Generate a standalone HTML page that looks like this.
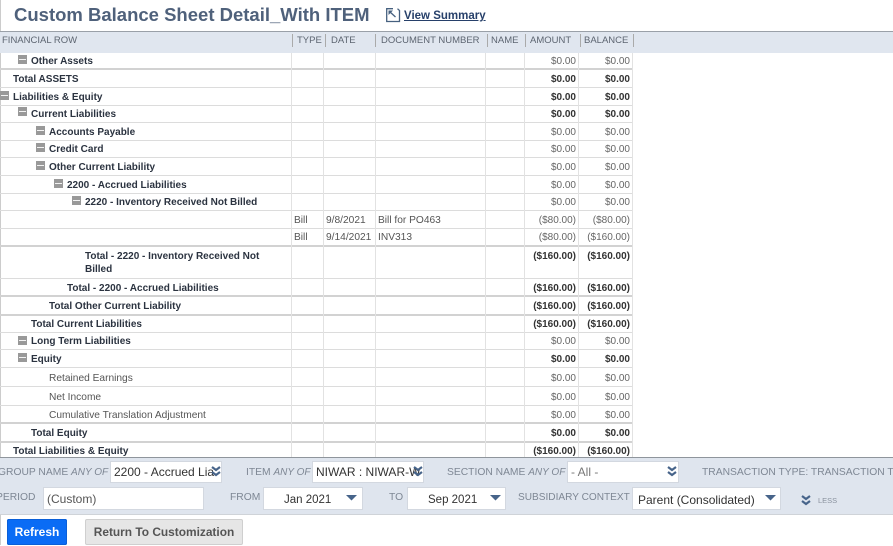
<!DOCTYPE html>
<html><head><meta charset="utf-8"><style>
html,body{margin:0;padding:0;background:#fff}
body{position:relative;width:893px;height:545px;overflow:hidden;font-family:"Liberation Sans",sans-serif;font-size:10px;color:#444}
div,span{position:absolute;white-space:nowrap}
.ln{left:0;width:632px;height:1px;background:#dcdcdc}
.tk{height:2px;background:#d2d2d2}
.v{top:53px;width:1px;height:404px;background:#e2e2e2}
.l,.a,.b,.t{height:16px;line-height:16px;margin-top:1px}
.l{font-weight:bold;color:#2b3340;font-size:10px}
.a{right:317px;text-align:right}.b{right:263px;text-align:right}
.a,.b{color:#666;font-size:10px}
.B{font-weight:bold;color:#333}
.t{color:#555;font-size:10.2px}
.m{width:9px;height:9px;background:#999}
.m:after{content:"";position:absolute;left:1px;top:4px;width:7px;height:1px;background:#f2f2f2}
.h{top:35px;height:12px;line-height:12px;font-size:9.5px;color:#5d6571}
.s{top:34px;width:1px;height:13px;background:#aaa}
.f{line-height:14px;height:14px;font-size:10.3px;color:#7e8794}
.f i{font-size:10px}
.in{background:#fff;border:1px solid #d3d8e0;box-sizing:border-box;font-size:12px;color:#333;line-height:20px;overflow:hidden}
</style></head><body>
<div style="left:0;top:0;width:1px;height:545px;background:#ccc"></div>
<div style="left:14px;top:3px;height:24px;line-height:24px;font-size:18.5px;font-weight:bold;color:#4f617b">Custom Balance Sheet Detail_With ITEM</div>
<svg style="position:absolute;left:385px;top:7px" width="16" height="16" viewBox="0 0 16 16" fill="none" stroke="#46607f" stroke-width="1.3"><path d="M8 1.700H1.700V14.500H14.500V3.500L12.500 1.700"/><path d="M10.500 10L4.500 4.500"/><path d="M3.500 3.500H8L3.500 8Z" fill="#46607f" stroke="none"/></svg>
<div style="left:404px;top:9px;height:14px;line-height:14px;font-size:11.5px;font-weight:bold;color:#27406a;text-decoration:underline">View Summary</div>

<div style="left:0;top:31px;width:893px;height:1px;background:#9aa0a8"></div>
<div style="left:0;top:32px;width:893px;height:21px;background:#e0e6ef"></div>
<div class="h" style="left:2px">FINANCIAL ROW</div>
<div class="s" style="left:292px"></div><div class="h" style="left:297px">TYPE</div>
<div class="s" style="left:325px"></div><div class="h" style="left:331px">DATE</div>
<div class="s" style="left:375px"></div><div class="h" style="left:381px">DOCUMENT NUMBER</div>
<div class="s" style="left:487px"></div><div class="h" style="left:491px">NAME</div>
<div class="s" style="left:525px"></div><div class="h" style="left:530px">AMOUNT</div>
<div class="s" style="left:580px"></div><div class="h" style="left:584px">BALANCE</div>
<div class="s" style="left:633px"></div>

<div class="ln tk" style="top:68px"></div><div class="ln" style="top:87px"></div><div class="ln" style="top:105px"></div><div class="ln" style="top:122px"></div><div class="ln" style="top:140px"></div><div class="ln" style="top:157px"></div><div class="ln" style="top:175px"></div><div class="ln" style="top:193px"></div><div class="ln" style="top:210px"></div><div class="ln" style="top:228px"></div><div class="ln tk" style="top:245px"></div><div class="ln" style="top:278px"></div><div class="ln tk" style="top:295px"></div><div class="ln tk" style="top:314px"></div><div class="ln" style="top:332px"></div><div class="ln" style="top:349px"></div><div class="ln" style="top:367px"></div><div class="ln" style="top:386px"></div><div class="ln" style="top:405px"></div><div class="ln tk" style="top:422px"></div><div class="ln tk" style="top:441px"></div>
<div class="v" style="left:291px"></div><div class="v" style="left:323px"></div><div class="v" style="left:375px"></div><div class="v" style="left:485px"></div><div class="v" style="left:524px"></div><div class="v" style="left:578px"></div><div class="v" style="left:632px"></div>

<div class="m" style="left:18px;top:55px"></div><div class="l" style="left:31px;top:53px">Other Assets</div><div class="a" style="top:53px">$0.00</div><div class="b" style="top:53px">$0.00</div>
<div class="l" style="left:13px;top:71px">Total ASSETS</div><div class="a B" style="top:71px">$0.00</div><div class="b B" style="top:71px">$0.00</div>
<div class="m" style="left:0;top:91px"></div><div class="l" style="left:13px;top:89px">Liabilities &amp; Equity</div><div class="a B" style="top:89px">$0.00</div><div class="b B" style="top:89px">$0.00</div>
<div class="m" style="left:18px;top:107px"></div><div class="l" style="left:31px;top:106px">Current Liabilities</div><div class="a B" style="top:106px">$0.00</div><div class="b B" style="top:106px">$0.00</div>
<div class="m" style="left:36px;top:126px"></div><div class="l" style="left:49px;top:124px">Accounts Payable</div><div class="a" style="top:124px">$0.00</div><div class="b" style="top:124px">$0.00</div>
<div class="m" style="left:36px;top:143px"></div><div class="l" style="left:49px;top:141px">Credit Card</div><div class="a" style="top:141px">$0.00</div><div class="b" style="top:141px">$0.00</div>
<div class="m" style="left:36px;top:161px"></div><div class="l" style="left:49px;top:159px">Other Current Liability</div><div class="a" style="top:159px">$0.00</div><div class="b" style="top:159px">$0.00</div>
<div class="m" style="left:54px;top:179px"></div><div class="l" style="left:67px;top:177px">2200 - Accrued Liabilities</div><div class="a" style="top:177px">$0.00</div><div class="b" style="top:177px">$0.00</div>
<div class="m" style="left:72px;top:196px"></div><div class="l" style="left:85px;top:194px">2220 - Inventory Received Not Billed</div><div class="a" style="top:194px">$0.00</div><div class="b" style="top:194px">$0.00</div>

<div class="t" style="left:294px;top:212px">Bill</div><div class="t" style="left:326px;top:212px">9/8/2021</div><div class="t" style="left:378px;top:212px">Bill for PO463</div><div class="a" style="top:212px">($80.00)</div><div class="b" style="top:212px">($80.00)</div>
<div class="t" style="left:294px;top:229px">Bill</div><div class="t" style="left:326px;top:229px">9/14/2021</div><div class="t" style="left:378px;top:229px">INV313</div><div class="a" style="top:229px">($80.00)</div><div class="b" style="top:229px">($160.00)</div>

<div class="l" style="left:85px;top:248px">Total - 2220 - Inventory Received Not</div><div class="l" style="left:85px;top:261px">Billed</div><div class="a B" style="top:248px">($160.00)</div><div class="b B" style="top:248px">($160.00)</div>
<div class="l" style="left:67px;top:280px">Total - 2200 - Accrued Liabilities</div><div class="a B" style="top:280px">($160.00)</div><div class="b B" style="top:280px">($160.00)</div>
<div class="l" style="left:49px;top:298px">Total Other Current Liability</div><div class="a B" style="top:298px">($160.00)</div><div class="b B" style="top:298px">($160.00)</div>
<div class="l" style="left:31px;top:316px">Total Current Liabilities</div><div class="a B" style="top:316px">($160.00)</div><div class="b B" style="top:316px">($160.00)</div>
<div class="m" style="left:18px;top:336px"></div><div class="l" style="left:31px;top:333px">Long Term Liabilities</div><div class="a" style="top:333px">$0.00</div><div class="b" style="top:333px">$0.00</div>
<div class="m" style="left:18px;top:353px"></div><div class="l" style="left:31px;top:351px">Equity</div><div class="a B" style="top:351px">$0.00</div><div class="b B" style="top:351px">$0.00</div>
<div class="t" style="left:49px;top:370px">Retained Earnings</div><div class="a" style="top:370px">$0.00</div><div class="b" style="top:370px">$0.00</div>
<div class="t" style="left:49px;top:389px">Net Income</div><div class="a" style="top:389px">$0.00</div><div class="b" style="top:389px">$0.00</div>
<div class="t" style="left:49px;top:407px">Cumulative Translation Adjustment</div><div class="a" style="top:407px">$0.00</div><div class="b" style="top:407px">$0.00</div>
<div class="l" style="left:31px;top:425px">Total Equity</div><div class="a B" style="top:425px">$0.00</div><div class="b B" style="top:425px">$0.00</div>
<div class="l" style="left:13px;top:443px">Total Liabilities &amp; Equity</div><div class="a B" style="top:443px">($160.00)</div><div class="b B" style="top:443px">($160.00)</div>

<div style="left:0;top:457px;width:893px;height:58px;background:#dfe5ee;border-top:1px solid #8f959c;border-bottom:1px solid #cfd3d8;box-sizing:border-box"></div>
<div class="f" style="left:-2px;top:466px">GROUP NAME <i>ANY OF</i></div>
<div class="in" style="left:110px;top:461px;width:112px;height:22px;padding-left:3px">2200 - Accrued Lia</div>
<div class="f" style="left:246px;top:466px">ITEM <i>ANY OF</i></div>
<div class="in" style="left:312px;top:461px;width:112px;height:22px;padding-left:3px">NIWAR : NIWAR-W</div>
<div class="f" style="left:447px;top:466px">SECTION NAME <i>ANY OF</i></div>
<div class="in" style="left:567px;top:461px;width:112px;height:22px;padding-left:3px;color:#777">- All -</div>
<div class="f" style="left:702px;top:466px">TRANSACTION TYPE: TRANSACTION TY</div>

<div class="f" style="left:-4px;top:491px">PERIOD</div>
<div class="in" style="left:43px;top:487px;width:161px;height:23px;padding-left:3px;line-height:22px;color:#555">(Custom)</div>
<div class="f" style="left:230px;top:491px">FROM</div>
<div class="in" style="left:263px;top:487px;width:100px;height:23px;padding-left:20px;line-height:24px;font-size:11.5px">Jan 2021</div>
<div class="f" style="left:389px;top:491px">TO</div>
<div class="in" style="left:407px;top:487px;width:99px;height:23px;padding-left:20px;line-height:24px;font-size:11.5px">Sep 2021</div>
<div class="f" style="left:518px;top:491px;font-size:10.1px">SUBSIDIARY CONTEXT</div>
<div class="in" style="left:632px;top:487px;width:149px;height:23px;padding-left:5px;line-height:24px">Parent (Consolidated)</div>
<div style="left:818px;top:496px;font-size:7.5px;line-height:10px;color:#8a929e">LESS</div>

<svg style="position:absolute;left:0;top:0" width="893" height="545" fill="none">
<g stroke="#47648a" stroke-width="2.200"><path d="M212 467l4 3 4-3M212 472l4 3 4-3M414 467l4 3 4-3M414 472l4 3 4-3M668 467l4 3 4-3M668 472l4 3 4-3M802 496l4 3 4-3M802 501l4 3 4-3"/></g>
<g fill="#47648a"><path d="M346 495h11l-5.500 5.500zM490 495h11l-5.500 5.500zM765 495h11l-5.500 5.500z"/></g>
</svg>

<div style="left:7px;top:519px;width:60px;height:26px;background:#0a6cf5;border-radius:2px;color:#fff;font-size:12px;font-weight:bold;line-height:27px;text-align:center;box-shadow:inset 0 0 0 1px #0a5fd8">Refresh</div>
<div style="left:85px;top:519px;width:158px;height:26px;box-sizing:border-box;background:#e6e6e6;border:1px solid #cfcfcf;border-radius:2px;color:#555;font-size:11.9px;font-weight:bold;line-height:25px;text-align:center">Return To Customization</div>
</body></html>
